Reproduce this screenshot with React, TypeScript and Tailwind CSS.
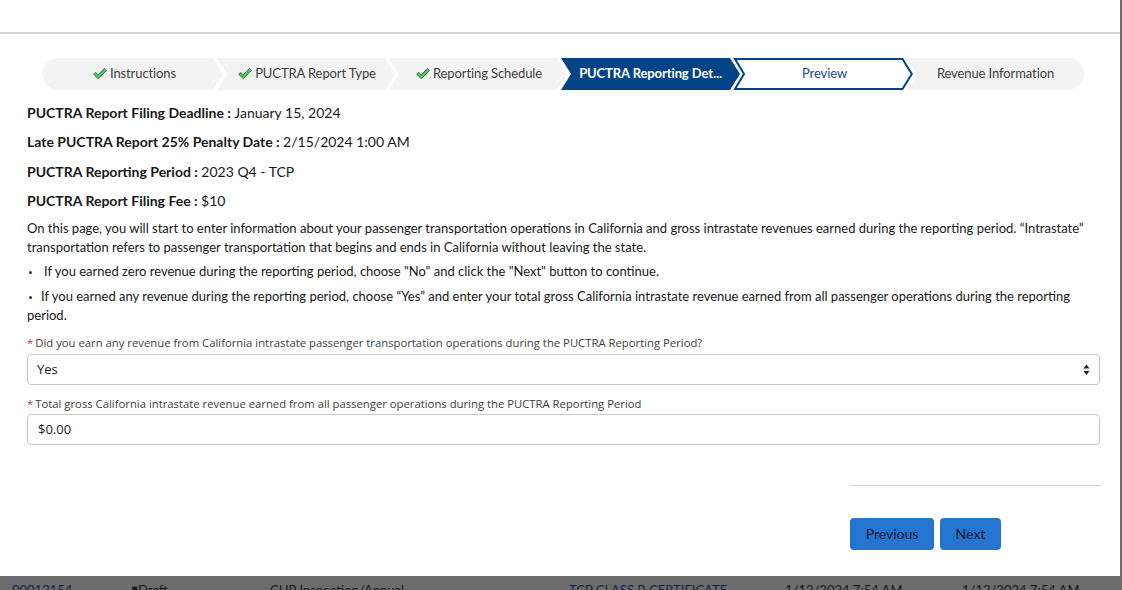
import React from "react";

type Kind = "first" | "mid" | "last";

function shapePath(kind: Kind, w: number) {
  if (kind === "first")
    return `M16,0 H${w - 4} L${w + 6},16 L${w - 4},32 H16 A16,16 0 0 1 16,0 Z`;
  if (kind === "last")
    return `M0,0 H${w - 16} A16,16 0 0 1 ${w - 16},32 H0 L10,16 Z`;
  return `M0,0 H${w - 4} L${w + 6},16 L${w - 4},32 H0 L10,16 Z`;
}

function Check() {
  return (
    <svg width="14" height="12" viewBox="0 0 14 12" className="mr-[3px] shrink-0">
      <polygon
        points="0.6,6.2 2.6,4.2 5.2,6.8 11.4,0.6 13.4,2.6 5.2,10.8"
        fill="#4cc35a"
        stroke="#2c6e31"
        strokeWidth="0.8"
        strokeLinejoin="round"
      />
    </svg>
  );
}

type Step = {
  label: string;
  w: number;
  kind: Kind;
  state: "done" | "active" | "next" | "todo";
  pad: string;
};

const steps: Step[] = [
  { label: "Instructions", w: 175, kind: "first", state: "done", pad: "pl-[10px]" },
  { label: "PUCTRA Report Type", w: 172, kind: "mid", state: "done", pad: "pl-[8px]" },
  { label: "Reporting Schedule", w: 172, kind: "mid", state: "done", pad: "pl-[8px]" },
  { label: "PUCTRA Reporting Det...", w: 173, kind: "mid", state: "active", pad: "pl-[6px]" },
  { label: "Preview", w: 173, kind: "mid", state: "next", pad: "pl-[8px]" },
  { label: "Revenue Information", w: 177, kind: "last", state: "todo", pad: "pl-0" },
];

function PathStep({ s }: { s: Step }) {
  const fill =
    s.state === "active" ? "#014486" : s.state === "next" ? "#ffffff" : "#f3f3f3";
  const text =
    s.state === "active"
      ? "text-white font-bold"
      : s.state === "next"
      ? "text-[#1b4a86]"
      : "text-[#3e3e3c]";
  return (
    <div className="relative h-8 shrink-0" style={{ width: s.w }}>
      <svg
        className="absolute left-0 top-0 overflow-visible"
        width={s.w}
        height={32}
        viewBox={`0 0 ${s.w} 32`}
      >
        {s.state === "next" ? (
          <path
            d={`M1,1 H${s.w - 4.5} L${s.w + 4.8},16 L${s.w - 4.5},31 H1 L10,16 Z`}
            fill="#ffffff"
            stroke="#014486"
            strokeWidth="2"
            strokeLinejoin="miter"
          />
        ) : (
          <path d={shapePath(s.kind, s.w)} fill={fill} />
        )}
      </svg>
      <div
        className={`relative flex h-8 items-center justify-center text-[13px] tracking-[-0.1px] ${text} ${s.pad}`}
      >
        {s.state === "done" && <Check />}
        <span>{s.label}</span>
      </div>
    </div>
  );
}

function InfoLine({ label, value }: { label: string; value: string }) {
  return (
    <div className="text-[14px] leading-[20px] text-[#181818]">
      <span className="font-bold">{label} : </span>
      <span>{value}</span>
    </div>
  );
}

function FieldLabel({ children }: { children: React.ReactNode }) {
  return (
    <div
      className="text-[11.3px] leading-[16px] text-[#3e3e3c]"
      style={{ fontFamily: '"Open Sans", "Noto Sans", sans-serif' }}
    >
      <span className="text-[#c23934] mr-[2px]">*</span>
      {children}
    </div>
  );
}

function Dot({ w }: { w: string }) {
  return (
    <span className={`inline-block ${w}`}>
      <span className="ml-[2px] inline-block h-[3px] w-[3px] rounded-full bg-[#303030] align-middle" />
    </span>
  );
}

export default function App() {
  return (
    <div
      className="flex h-[590px] w-[1122px] flex-col overflow-hidden bg-[#6c6c6c]"
      style={{ fontFamily: 'Lato, "Open Sans", sans-serif' }}
    >
      <div className="flex h-[576px] w-[1120px] shrink-0 flex-col bg-white">
        <div className="h-[34px] shrink-0 border-b-2 border-[#d6d6d6]" />
        <div className="flex flex-col pl-[27px] pr-[20px]">
          <div className="mt-[24px] flex pl-[15px]">
            {steps.map((s) => (
              <PathStep key={s.label} s={s} />
            ))}
          </div>

          <div className="mt-[13px] flex flex-col gap-[9.3px]">
            <InfoLine label="PUCTRA Report Filing Deadline" value="January 15, 2024" />
            <InfoLine
              label="Late PUCTRA Report 25% Penalty Date"
              value="2/15/2024 1:00 AM"
            />
            <InfoLine label="PUCTRA Reporting Period" value="2023 Q4 - TCP" />
            <InfoLine label="PUCTRA Report Filing Fee" value="$10" />
          </div>

          <div className="mt-[8px] text-[13px] leading-[19px] text-[#181818]">
            <p>
              On this page, you will start to enter information about your passenger
              transportation operations in California and gross intrastate revenues
              earned during the reporting period. “Intrastate” transportation refers to
              passenger transportation that begins and ends in California without
              leaving the state.
            </p>
            <p className="mt-[5px]">
              <Dot w="w-[17px]" />
              If you earned zero revenue during the reporting period, choose "No" and
              click the "Next" button to continue.
            </p>
            <p className="mt-[6px] pr-[30px]">
              <Dot w="w-[14px]" />
              If you earned any revenue during the reporting period, choose “Yes” and
              enter your total gross California intrastate revenue earned from all
              passenger operations during the reporting period.
            </p>
          </div>

          <div className="mt-[10px]">
            <FieldLabel>
              Did you earn any revenue from California intrastate passenger
              transportation operations during the PUCTRA Reporting Period?
            </FieldLabel>
          </div>
          <div
            className="mt-[3px] flex h-[31px] items-center justify-between rounded-[4px] border border-[#c9c9c9] bg-white pl-[9px] pr-[9px] text-[13px] text-[#181818]"
            style={{ fontFamily: '"Open Sans", "Noto Sans", sans-serif' }}
          >
            <span>Yes</span>
            <svg width="7" height="13" viewBox="0 0 7 13">
              <polygon points="3.5,1.5 6.5,5.5 0.5,5.5" fill="#222" />
              <polygon points="0.5,8 6.5,8 3.5,12" fill="#222" />
            </svg>
          </div>

          <div className="mt-[11px]">
            <FieldLabel>
              Total gross California intrastate revenue earned from all passenger
              operations during the PUCTRA Reporting Period
            </FieldLabel>
          </div>
          <div
            className="mt-[2px] flex h-[31px] items-center rounded-[4px] border border-[#c9c9c9] bg-white pl-[10px] text-[13px] text-[#181818]"
            style={{ fontFamily: '"Open Sans", "Noto Sans", sans-serif' }}
          >
            $0.00
          </div>

          <div className="mt-[40px] flex justify-end">
            <div className="flex w-[250px] flex-col">
              <div className="h-px bg-[#d4d4d4]" />
              <div className="mt-[32px] flex gap-[6px]">
                <button className="h-[32px] w-[84px] rounded-[4px] bg-[#2574cf] text-[14px] text-[#0c1c33]">
                  Previous
                </button>
                <button className="h-[32px] w-[61px] rounded-[4px] bg-[#2574cf] text-[14px] text-[#0c1c33]">
                  Next
                </button>
              </div>
            </div>
          </div>
        </div>
      </div>

      <div className="relative h-[14px] overflow-hidden text-[13px]">
        <div className="absolute left-0 top-[5px] w-full whitespace-nowrap leading-[18px]">
          <span className="absolute left-[12px] text-[#0a2647]">00012154</span>
          <span className="absolute left-[131px] text-[#1a1a1a]">▮Draft</span>
          <span className="absolute left-[270px] text-[#1a1a1a]">CHP Inspection/Annual</span>
          <span className="absolute left-[569px] text-[#0a2647]">TCP CLASS B CERTIFICATE</span>
          <span className="absolute left-[785px] text-[#1a1a1a]">1/12/2024 7:54 AM</span>
          <span className="absolute left-[962px] text-[#1a1a1a]">1/12/2024 7:54 AM</span>
        </div>
      </div>
    </div>
  );
}
